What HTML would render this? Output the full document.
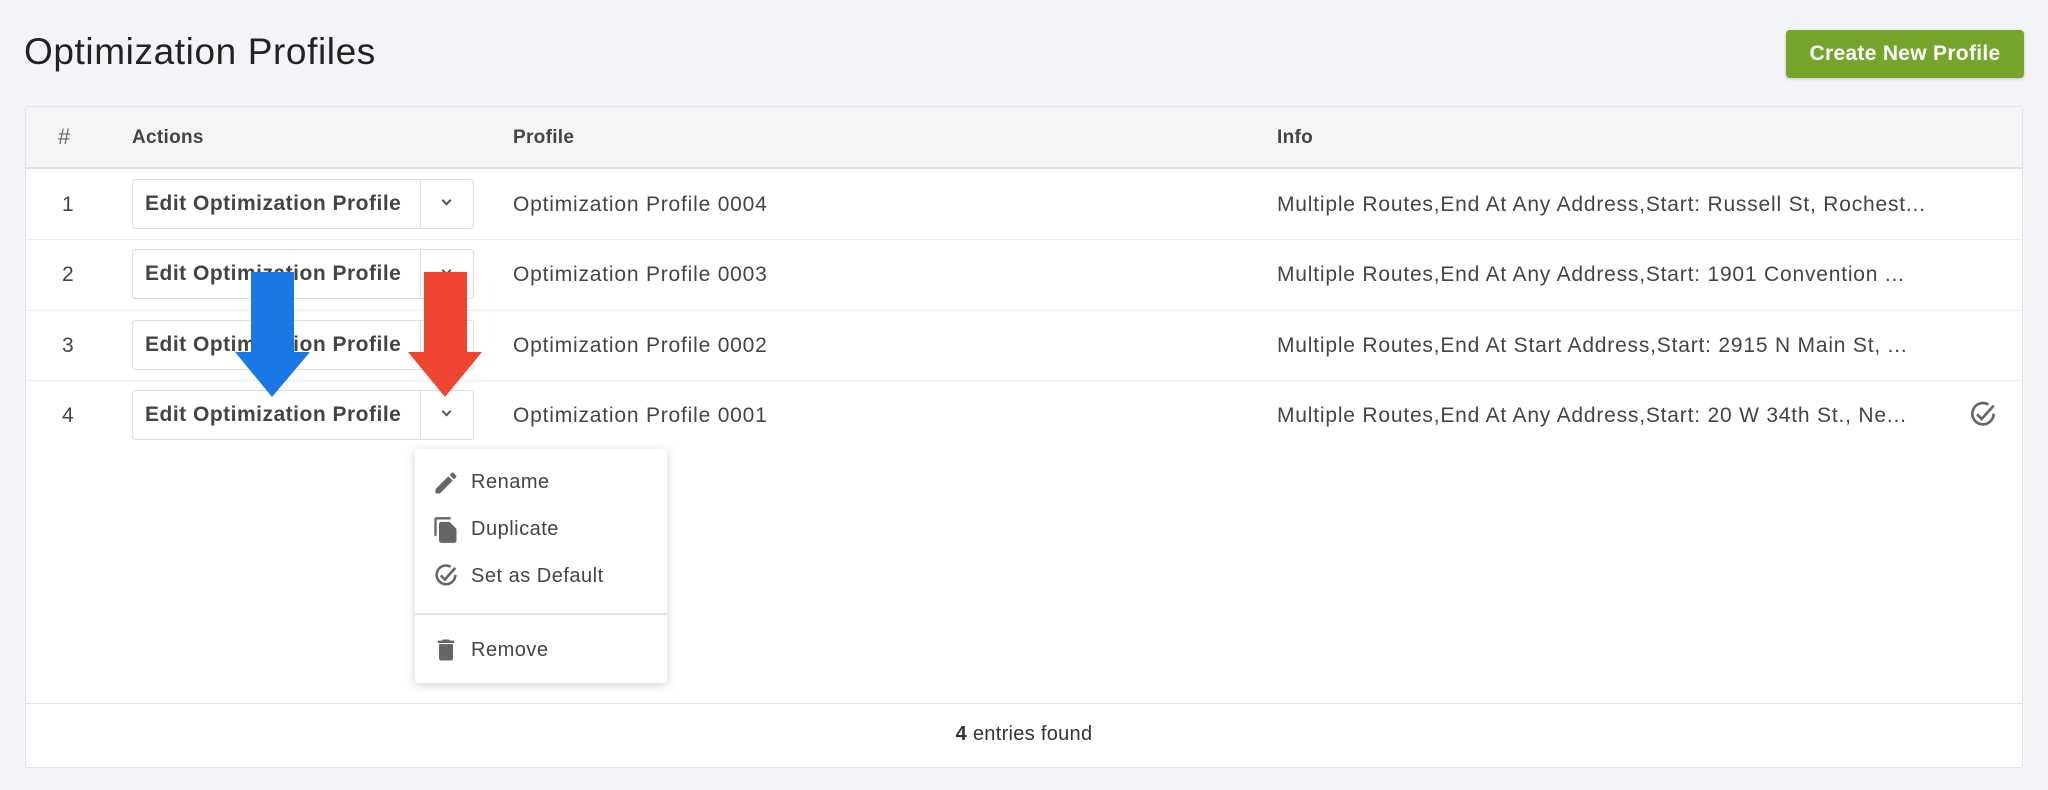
<!DOCTYPE html>
<html><head><meta charset="utf-8"><style>
*{box-sizing:border-box;margin:0;padding:0}
body{width:2048px;height:790px;background:#f3f4f7;font-family:"Liberation Sans",sans-serif;color:#333;position:relative;overflow:hidden}
.title{position:absolute;left:24px;top:31px;font-size:37px;color:#222;letter-spacing:0.6px}
.btn{position:absolute;left:1786px;top:30px;width:238px;height:48px;background:#76a52b;border-radius:4px;color:#fff;font-weight:bold;font-size:21px;letter-spacing:0.3px;display:flex;align-items:center;justify-content:center;box-shadow:0 1px 3px rgba(0,0,0,.2)}
.card{position:absolute;left:25px;top:106px;width:1998px;height:662px;background:#fff;border:1px solid #e2e2e2;border-radius:3px}
.hdr{position:absolute;left:0;top:0;width:100%;height:62px;background:#f5f5f5;border-bottom:2px solid #e0e0e0}
.t{position:absolute;font-size:21px;color:#444;white-space:nowrap;letter-spacing:0.8px}
.h{font-size:19px;color:#444;font-weight:bold;letter-spacing:0.3px}
.row{position:absolute;left:0;width:100%;height:1px;background:#eee}
.grp{position:absolute;left:106px;width:342px;height:50px;border:1px solid #ddd;border-radius:4px;background:#fff}
.grp b{position:absolute;left:12px;top:12px;font-size:21px;color:#444;letter-spacing:0.5px;white-space:nowrap}
.grp i{position:absolute;left:287px;top:0;width:1px;height:48px;background:#ddd}
.grp span{position:absolute;left:310px;top:17px;width:7px;height:7px;border-right:2px solid #555;border-bottom:2px solid #555;transform:rotate(45deg)}
.menu{position:absolute;left:415px;top:449px;width:252px;height:234px;background:#fff;border-radius:4px;box-shadow:0 2px 10px rgba(0,0,0,.18)}
.mi{position:absolute;left:56px;font-size:20px;color:#444;letter-spacing:0.5px}
</style></head><body>
<div class="title">Optimization Profiles</div>
<div class="btn">Create New Profile</div>
<div class="card">
<div class="hdr"></div>
<div class="t" style="left:32px;top:17px;font-size:22px;color:#666">#</div>
<div class="t h" style="left:106px;top:20px">Actions</div>
<div class="t h" style="left:487px;top:20px">Profile</div>
<div class="t h" style="left:1251px;top:20px">Info</div>
<div class="row" style="top:132px"></div>
<div class="row" style="top:203px"></div>
<div class="row" style="top:273px"></div>
<div class="row" style="top:596px;background:#e2e2e2"></div>

<div class="t" style="left:36px;top:86px">1</div>
<div class="grp" style="top:72px"><b>Edit Optimization Profile</b><i></i><span></span></div>
<div class="t" style="left:487px;top:86px">Optimization Profile 0004</div>
<div class="t" style="left:1251px;top:86px">Multiple Routes,End At Any Address,Start: Russell St, Rochest...</div>

<div class="t" style="left:36px;top:156px">2</div>
<div class="grp" style="top:142px"><b>Edit Optimization Profile</b><i></i><span></span></div>
<div class="t" style="left:487px;top:156px">Optimization Profile 0003</div>
<div class="t" style="left:1251px;top:156px">Multiple Routes,End At Any Address,Start: 1901 Convention ...</div>

<div class="t" style="left:36px;top:227px">3</div>
<div class="grp" style="top:213px"><b>Edit Optimization Profile</b><i></i><span></span></div>
<div class="t" style="left:487px;top:227px">Optimization Profile 0002</div>
<div class="t" style="left:1251px;top:227px">Multiple Routes,End At Start Address,Start: 2915 N Main St, ...</div>

<div class="t" style="left:36px;top:297px">4</div>
<div class="grp" style="top:283px"><b>Edit Optimization Profile</b><i></i><span></span></div>
<div class="t" style="left:487px;top:297px">Optimization Profile 0001</div>
<div class="t" style="left:1251px;top:297px">Multiple Routes,End At Any Address,Start: 20 W 34th St., Ne...</div>
<svg style="position:absolute;left:1941px;top:292px" width="32" height="32" viewBox="0 0 24 24"><path d="M20 11a8 8 0 1 1-4-6.9" fill="none" stroke="#666" stroke-width="2"/><path d="M7.5 11.5l3.5 3.5 9-10" fill="none" stroke="#666" stroke-width="2"/></svg>

<div class="t" style="left:0;width:100%;text-align:center;top:616px;font-size:20px;color:#333;letter-spacing:0.3px"><b>4</b> entries found</div>
</div>

<div class="menu">
<svg style="position:absolute;left:17px;top:20px" width="28" height="28" viewBox="0 0 24 24"><path d="M3 17.25V21h3.75L17.8 9.94l-3.75-3.75L3 17.25zM20.7 7.04a1 1 0 0 0 0-1.41l-2.34-2.34a1 1 0 0 0-1.41 0l-1.83 1.83 3.75 3.75 1.83-1.83z" fill="#666"/></svg>
<div class="mi" style="top:22px">Rename</div>
<svg style="position:absolute;left:17px;top:66px" width="28" height="30" viewBox="0 0 24 24"><path d="M16 1H4a2 2 0 0 0-2 2v14h2V3h12V1zm-1 4l6 6v10a2 2 0 0 1-2 2H8a2 2 0 0 1-2-2V7a2 2 0 0 1 2-2h7z" fill="#666"/></svg>
<div class="mi" style="top:69px">Duplicate</div>
<svg style="position:absolute;left:17px;top:113px" width="28" height="28" viewBox="0 0 24 24"><path d="M20 11a8 8 0 1 1-4-6.9" fill="none" stroke="#666" stroke-width="2.2"/><path d="M7.5 11.5l3.5 3.5 9-10" fill="none" stroke="#666" stroke-width="2.2"/></svg>
<div class="mi" style="top:116px">Set as Default</div>
<div style="position:absolute;left:0;top:164px;width:100%;height:2px;background:#e6e6e6"></div>
<svg style="position:absolute;left:17px;top:186px" width="28" height="30" viewBox="0 0 24 24"><path d="M6 19a2 2 0 0 0 2 2h8a2 2 0 0 0 2-2V7H6v12zM19 4h-3.5l-1-1h-5l-1 1H5v2h14V4z" fill="#666"/></svg>
<div class="mi" style="top:190px">Remove</div>
</div>

<svg style="position:absolute;left:0;top:0" width="2048" height="790">
<polygon points="251,272 294,272 294,352 310,352 272,397 235,352 251,352" fill="#1a78e5"/>
<polygon points="424,272 467,272 467,352 482,352 445,397 408,352 424,352" fill="#ef4430"/>
</svg>
</body></html>
